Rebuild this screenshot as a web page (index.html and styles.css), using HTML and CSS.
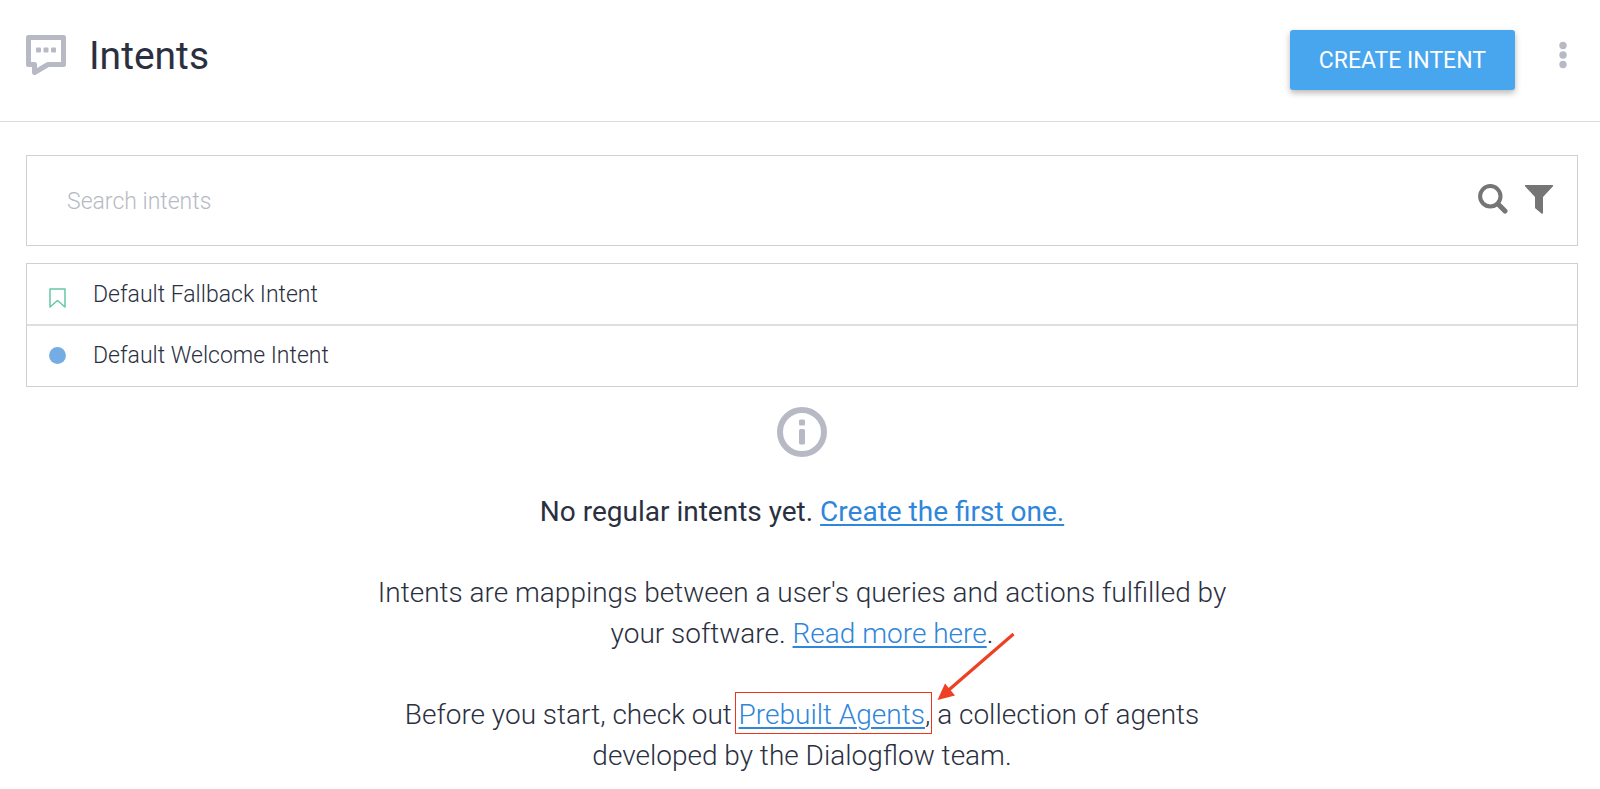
FILE: index.html
```html
<!DOCTYPE html>
<html lang="en">
<head>
<meta charset="utf-8">
<title>Intents</title>
<link rel="stylesheet" href="styles.css">
</head>
<body>
<header class="header">
  <svg class="header-icon" viewBox="0 0 40 40" aria-hidden="true">
    <path d="M2.5 2.5H37.500V29.500H22L8.500 37.500V29.500H2.500Z" fill="none" stroke="#b7bac4" stroke-width="5" stroke-linejoin="round"/>
    <g fill="#b7bac4"><rect x="10" y="12.500" width="5" height="5" rx="1"/><rect x="17.500" y="12.500" width="5" height="5" rx="1"/><rect x="25" y="12.500" width="5" height="5" rx="1"/></g>
  </svg>
  <h1 class="title">Intents</h1>
  <button class="create" type="button">CREATE INTENT</button>
  <button class="icon-button more" type="button" aria-label="More options">
    <svg width="8" height="28" viewBox="0 0 8 28" fill="#b7bac4"><circle cx="4" cy="4.500" r="3.700"/><circle cx="4" cy="14" r="3.700"/><circle cx="4" cy="23.500" r="3.700"/></svg>
  </button>
</header>
<main class="main">
  <form class="search">
    <input class="search-input" type="text" placeholder="Search intents" aria-label="Search intents">
    <button class="icon-button" type="button" aria-label="Search">
      <svg width="30" height="30" viewBox="0 0 30 30" fill="none" stroke="#757575"><circle cx="12.300" cy="12.300" r="10.200" stroke-width="4"/><path d="M19 19L26.800 26.800" stroke-width="4"/><path d="M21 21L27 27" stroke-width="5" stroke-linecap="round"/></svg>
    </button>
    <button class="icon-button" type="button" aria-label="Filter">
      <svg width="30" height="30" viewBox="0 0 30 30" fill="#757575"><path d="M1.500 1H28.500Q29.800 1 29 2.200L19 13V29Q18.700 30.200 17.500 29.500L11.500 24.500Q11 24 11 23V13L1 2.200Q.2 1 1.500 1Z"/></svg>
    </button>
  </form>
  <ul class="list">
    <li class="row">
      <svg class="row-icon bookmark" viewBox="0 0 17 20" aria-hidden="true"><path d="M1 1H16V19L8.500 12.500L1 19Z" fill="none" stroke="#67c6a9" stroke-width="1.500" stroke-linejoin="round"/></svg>
      <span>Default Fallback Intent</span>
    </li>
    <li class="row">
      <svg class="row-icon dot" viewBox="0 0 17 17" aria-hidden="true"><circle cx="8.500" cy="8.500" r="8.400" fill="#76ace4"/></svg>
      <span>Default Welcome Intent</span>
    </li>
  </ul>
  <section class="empty">
    <svg class="info" viewBox="0 0 50 50" aria-hidden="true"><circle cx="25" cy="25" r="22" fill="none" stroke="#b7bac4" stroke-width="6"/><g fill="#b7bac4"><rect x="22" y="12.500" width="6" height="6" rx="1.500"/><rect x="22" y="22" width="6" height="15.500" rx="1.500"/></g></svg>
    <p class="text lead">No regular intents yet. <a class="link" href="#">Create the first one.</a></p>
    <p class="text">Intents are mappings between a user's queries and actions fulfilled by your software. <a class="link" href="#">Read more here</a>.</p>
    <p class="text">Before you start, check out <span class="callout"><a class="link" href="#">Prebuilt Agents</a>,<svg class="arrow" viewBox="0 0 78 68" aria-hidden="true"><path d="M76.500 1L10 58.500" stroke="#ee4023" stroke-width="3.200"/><path d="M.5 67L8 50.500L18 62.500Z" fill="#ee4023"/></svg></span> a collection of agents developed by the Dialogflow team.</p>
  </section>
</main>
</body>
</html>
```
FILE: styles.css
```css
* { box-sizing: border-box; }

body {
  margin: 0;
  background: #fff;
  color: #2b303f;
  font-family: Roboto, "Liberation Sans", sans-serif;
  font-weight: 300;
}

button {
  border: 0;
  font-family: inherit;
  cursor: pointer;
}

.icon-button {
  display: flex;
  padding: 0;
  background: none;
}

.header {
  display: flex;
  align-items: flex-start;
  height: 122px;
  padding: 30px 33px 0 26px;
  border-bottom: 1px solid #dcdcdc;
}

.header-icon {
  width: 40px;
  height: 40px;
  margin-top: 5px;
}

.title {
  flex: 1;
  margin: 0 0 0 23px;
  font-size: 39px;
  font-weight: 400;
  line-height: 52px;
}

.create {
  height: 60px;
  padding: 0 29px;
  border-radius: 3px;
  background: #48a6ef;
  box-shadow: 0 3px 6px rgba(0, 0, 0, 0.28);
  color: #fff;
  font-size: 23px;
  font-weight: 400;
}

.more { margin: 11px 0 0 44px; }

.main { padding: 33px 22px 0 26px; }

.search {
  display: flex;
  align-items: center;
  gap: 16px;
  height: 91px;
  padding: 0 23px 4px 40px;
  border: 1px solid #d0d1d3;
}

.search-input {
  flex: 1;
  height: 60px;
  margin-top: 6px;
  padding: 0;
  border: 0;
  outline: 0;
  background: none;
  color: inherit;
  font: inherit;
  font-size: 23px;
}

.search-input::placeholder { color: #b7bac4; }

.list {
  margin: 17px 0 0;
  padding: 0;
  border: 1px solid #d0d1d3;
  list-style: none;
}

.row {
  display: flex;
  align-items: center;
  gap: 27px;
  height: 60px;
  padding-left: 22px;
  font-size: 23px;
}

.row + .row {
  height: 62px;
  padding-bottom: 2px;
  border-top: 2px solid #dedfe0;
}

.row-icon { width: 17px; }

.bookmark {
  height: 20px;
  margin-top: 8px;
}

.dot { height: 17px; }

.empty {
  display: flex;
  flex-direction: column;
  align-items: center;
  padding-top: 20px;
  text-align: center;
}

.info {
  width: 50px;
  height: 50px;
  margin-bottom: 34px;
}

.text {
  max-width: 880px;
  margin: 0 0 40px;
  font-size: 28px;
  line-height: 41px;
}

.lead { font-weight: 400; }

.link {
  color: #2f86da;
  text-decoration-thickness: 2px;
  text-underline-offset: 3px;
}

.callout {
  position: relative;
  display: inline-block;
}

.callout::after {
  content: "";
  position: absolute;
  inset: 0 -2px -1px -4px;
  border: 1px solid #f0351a;
  translate: 0 -2px;
}

.arrow {
  position: absolute;
  left: 100%;
  bottom: 34px;
  width: 78px;
  height: 68px;
  margin-left: 7px;
}
```
